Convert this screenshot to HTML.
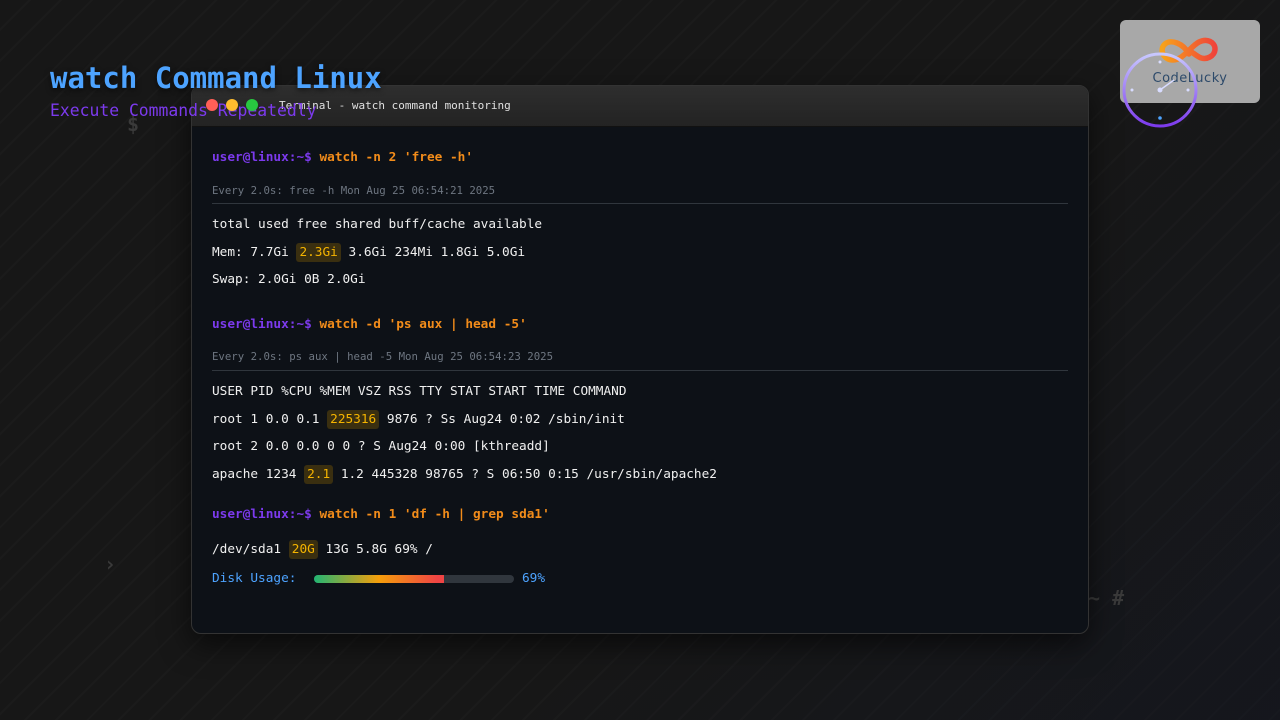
<!DOCTYPE html>
<html><head><meta charset="utf-8"><style>
*{margin:0;padding:0;box-sizing:border-box}
body{width:1280px;height:720px;overflow:hidden;position:relative;font-family:"DejaVu Sans Mono","Liberation Mono",monospace;
background:repeating-linear-gradient(135deg,#171717 0 20px,#1b1b1b 20px 22px),#181818;}
.bgfade{position:absolute;inset:0;background:linear-gradient(135deg,rgba(0,0,0,0) 60%,rgba(18,22,36,.45))}
.t{position:absolute;left:50px;top:61px;font-size:29px;font-weight:bold;color:#4da3ff;text-shadow:0 2px 6px rgba(0,0,0,.6);z-index:5}
.s{position:absolute;left:50px;top:101px;font-size:16.4px;color:#7c3aed;z-index:5}
.win{position:absolute;left:191px;top:85px;width:898px;height:549px;background:#0d1117;border:1px solid #333;border-radius:10px;overflow:hidden;box-shadow:0 10px 30px rgba(0,0,0,.6)}
.hd{height:41px;background:linear-gradient(#2e2e2e,#232323);border-bottom:1px solid #111;position:relative}
.dot{position:absolute;top:99px;width:12px;height:12px;border-radius:50%;z-index:6}
.ht{position:absolute;left:87px;top:13px;font-size:11px;color:#e0e0e0}
.l{position:absolute;left:20px;white-space:pre;font-size:12.75px;color:#f0f0f0;line-height:16px}
.p{color:#7c3aed;font-weight:bold}.c{color:#f28c1a;font-weight:bold}
.e{font-size:10.7px;color:#6e7681}
.hr{position:absolute;left:20px;right:20px;height:1px;background:#30363d}
.h{background:#3a2f10;color:#f5b400;padding:2px 3px;border-radius:3px}
.bar{position:absolute;left:122px;top:489px;width:200px;height:8px;border-radius:4px;background:#30363d;overflow:hidden}
.bar div{width:130px;height:8px;background:linear-gradient(90deg,#22b573,#f59e0b 50%,#ef4444 95%)}
.deco{position:absolute;color:#3a3a3a;font-weight:bold;font-size:20px}
</style></head><body><div class="bgfade"></div>
<div class="deco" style="left:127px;top:112px">$</div>
<div class="deco" style="left:104px;top:552px">›</div>
<div class="deco" style="left:1088px;top:586px">~ #</div>
<div class="t">watch Command Linux</div>
<div class="win">
<div class="hd"><div class="ht">Terminal - watch command monitoring</div></div>
<div class="l" style="top:64px"><span class="p">user@linux:~$</span> <span class="c">watch -n 2 'free -h'</span></div>
<div class="l e" style="top:97px">Every 2.0s: free -h Mon Aug 25 06:54:21 2025</div>
<div class="hr" style="top:117px"></div>
<div class="l" style="top:131px">total used free shared buff/cache available</div>
<div class="l" style="top:159px">Mem: 7.7Gi <span class="h">2.3Gi</span> 3.6Gi 234Mi 1.8Gi 5.0Gi</div>
<div class="l" style="top:186px">Swap: 2.0Gi 0B 2.0Gi</div>
<div class="l" style="top:231px"><span class="p">user@linux:~$</span> <span class="c">watch -d 'ps aux | head -5'</span></div>
<div class="l e" style="top:263px">Every 2.0s: ps aux | head -5 Mon Aug 25 06:54:23 2025</div>
<div class="hr" style="top:284px"></div>
<div class="l" style="top:298px">USER PID %CPU %MEM VSZ RSS TTY STAT START TIME COMMAND</div>
<div class="l" style="top:326px">root 1 0.0 0.1 <span class="h">225316</span> 9876 ? Ss Aug24 0:02 /sbin/init</div>
<div class="l" style="top:353px">root 2 0.0 0.0 0 0 ? S Aug24 0:00 [kthreadd]</div>
<div class="l" style="top:381px">apache 1234 <span class="h">2.1</span> 1.2 445328 98765 ? S 06:50 0:15 /usr/sbin/apache2</div>
<div class="l" style="top:421px"><span class="p">user@linux:~$</span> <span class="c">watch -n 1 'df -h | grep sda1'</span></div>
<div class="l" style="top:456px">/dev/sda1 <span class="h">20G</span> 13G 5.8G 69% /</div>
<div class="l" style="top:485px;color:#4da3ff">Disk Usage:</div>
<div class="bar"><div></div></div>
<div class="l" style="top:485px;left:330px;color:#4da3ff">69%</div>
</div>
<div class="s">Execute Commands Repeatedly</div>
<div class="dot" style="left:206px;background:#ff5f57"></div><div class="dot" style="left:226px;background:#febc2e"></div><div class="dot" style="left:246px;background:#28c840"></div>
<div style="position:absolute;left:1120px;top:20px;width:140px;height:83px;background:rgba(200,200,200,.82);border-radius:6px"></div>
<svg style="position:absolute;left:1120px;top:20px" width="160" height="115" viewBox="0 0 160 115">
<defs><linearGradient id="g" x1="0" x2="1"><stop offset="0" stop-color="#f7a21b"/><stop offset="1" stop-color="#f0433a"/></linearGradient>
<linearGradient id="r" x1="0" y1="0" x2="0" y2="1"><stop offset="0" stop-color="#c8c8ff"/><stop offset="1" stop-color="#7c3aed"/></linearGradient></defs>
<path d="M69 34c-6-11-18-15-24-10s-2 16 8 16 18-14 26-18 16 0 16 7-9 12-16 8-8-7-10-4" fill="none" stroke="url(#g)" stroke-width="5.5" stroke-linecap="round"/>
<text x="70" y="62" text-anchor="middle" font-family="DejaVu Sans,sans-serif" font-size="13" fill="#2d4a6a" letter-spacing=".5">CodeLucky</text>
<circle cx="40" cy="70" r="36" fill="none" stroke="url(#r)" stroke-width="3"/>
<circle cx="40" cy="70" r="2.5" fill="#d8dcff"/><line x1="40" y1="70" x2="54" y2="60" stroke="#d8dcff" stroke-width="1.5"/>
<circle cx="40" cy="42" r="1.5" fill="#d8dcff"/><circle cx="12" cy="70" r="1.5" fill="#d8dcff"/><circle cx="68" cy="70" r="1.5" fill="#d8dcff"/><circle cx="40" cy="98" r="1.8" fill="#4da3ff"/>
</svg>
</body></html>
